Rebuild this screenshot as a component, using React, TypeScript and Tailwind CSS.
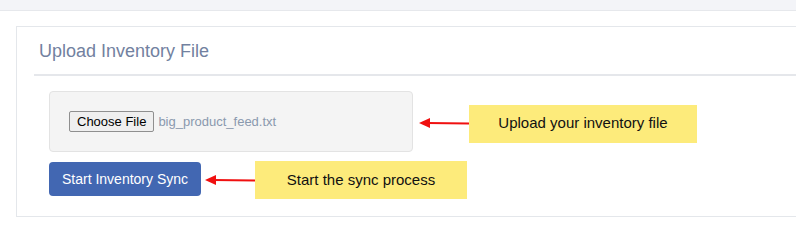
import React from 'react';

function Arrow({ width }: { width: number }) {
  return (
    <svg width={width} height="12" viewBox={`0 0 ${width} 12`} className="shrink-0">
      <line x1="8" y1="6" x2={width} y2="6.5" stroke="#f01010" strokeWidth="2" />
      <polygon points="0,6 11,1 11,11" fill="#f01010" />
    </svg>
  );
}

function Callout({ children, className = '' }: { children: React.ReactNode; className?: string }) {
  return (
    <div className={`flex items-center justify-center bg-[#fdeb7b] text-[15px] text-[#111] ${className}`}>
      {children}
    </div>
  );
}

export default function App() {
  return (
    <div className="w-[796px] h-[238px] overflow-hidden bg-white font-['Liberation_Sans',Arial,sans-serif]">
      {/* Top strip */}
      <div className="h-[11px] bg-[#f3f4f8] border-b border-[#e6e8ec]" />

      <div className="pt-[15px] pl-4">
        {/* Card */}
        <div className="w-[800px] border border-[#e4e7eb] pt-[14px] pb-[17px]">
          <div className="px-[17px]">
            <h3 className="pl-[5px] text-[18px] leading-[20px] text-[#7281a0]">Upload Inventory File</h3>
            <div className="mt-[13px] h-[2px] bg-[#e5e7eb]" />
          </div>

          <div className="pl-[32px] pt-[15px]">
            {/* Upload row */}
            <div className="flex items-center">
              <div className="w-[364px] h-[61px] flex items-center px-[19px] rounded-[4px] border border-[#e3e3e3] bg-[#f4f4f4]">
                <span className="h-[21px] px-[7px] flex items-center rounded-[2px] border border-[#8f8f8f] bg-[#efefef] text-[13px] text-black">
                  Choose File
                </span>
                <span className="ml-[4px] text-[13px] text-[#8a99ae]">big_product_feed.txt</span>
              </div>
              <div className="ml-[6px] mt-[3px]">
                <Arrow width={50} />
              </div>
              <Callout className="mt-[4px] w-[228px] h-[38px]">Upload your inventory file</Callout>
            </div>

            {/* Sync row */}
            <div className="mt-[9px] flex items-start">
              <button className="mt-[1px] w-[152px] h-[34px] rounded-[4px] bg-[#4267b2] text-[14px] text-white">
                Start Inventory Sync
              </button>
              <div className="ml-[4px] mt-[13px]">
                <Arrow width={50} />
              </div>
              <Callout className="w-[212px] h-[38px]">Start the sync process</Callout>
            </div>
          </div>
        </div>
      </div>
    </div>
  );
}
